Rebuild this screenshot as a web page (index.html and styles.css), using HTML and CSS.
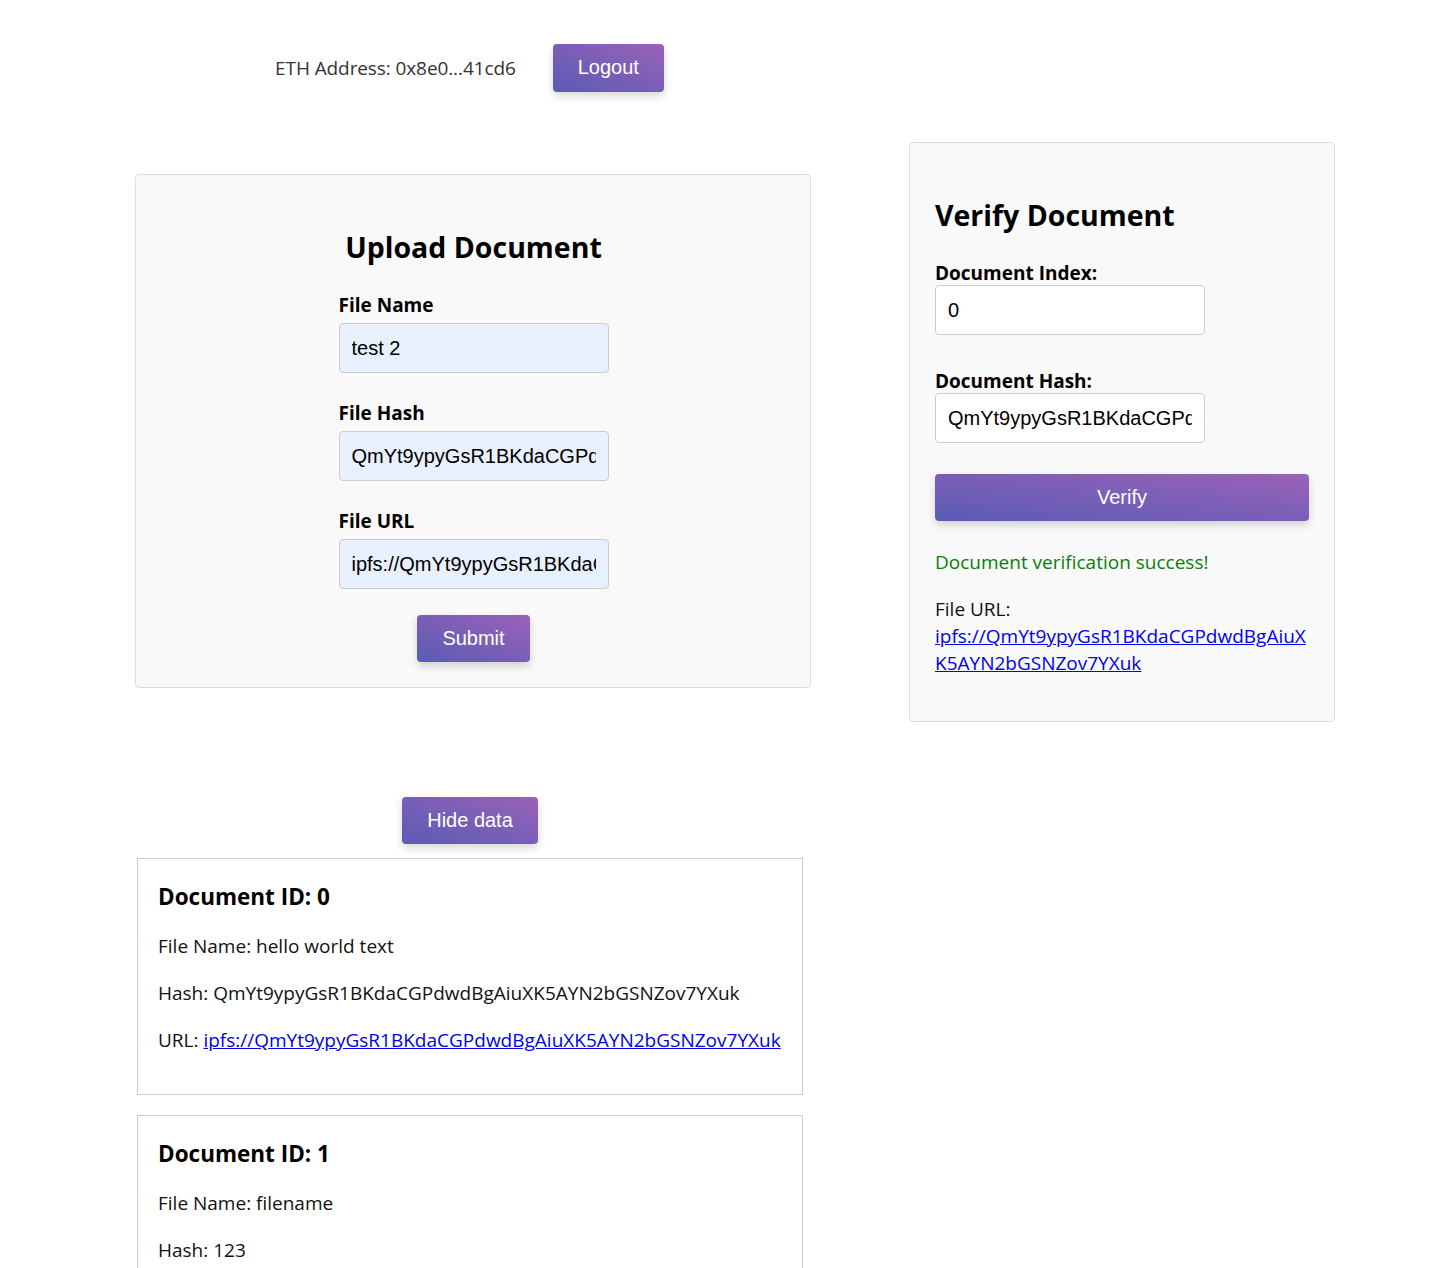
FILE: index.html
```html
<!DOCTYPE html>
<html lang="en">
<head>
<meta charset="utf-8">
<title>Document Registry</title>
<link rel="stylesheet" href="styles.css">
</head>
<body>
<div class="app">
  <div class="main-col">
    <div class="header">
      <span class="eth">ETH Address: 0x8e0...41cd6</span>
      <button class="btn">Logout</button>
    </div>
    <div class="card upload-card">
      <h2 class="card-title center">Upload Document</h2>
      <form class="upload-form">
        <div class="field">
          <label class="field-label">File Name</label>
          <input class="input filled" type="text" value="test 2">
        </div>
        <div class="field">
          <label class="field-label">File Hash</label>
          <input class="input filled" type="text" value="QmYt9ypyGsR1BKdaCGPdwdBgAiuXK5AYN2bGSNZov7YXuk">
        </div>
        <div class="field">
          <label class="field-label">File URL</label>
          <input class="input filled" type="text" value="ipfs://QmYt9ypyGsR1BKdaCGPdwdBgAiuXK5AYN2bGSNZov7YXuk">
        </div>
        <div class="submit-row">
          <button class="btn" type="button">Submit</button>
        </div>
      </form>
    </div>
  </div>
  <div class="side-col">
    <div class="card verify-card">
      <h2 class="card-title">Verify Document</h2>
      <label class="v-label">Document Index:</label>
      <input class="input" type="text" value="0">
      <label class="v-label second">Document Hash:</label>
      <input class="input" type="text" value="QmYt9ypyGsR1BKdaCGPdwdBgAiuXK5AYN2bGSNZov7YXuk">
      <button class="btn btn-block" type="button">Verify</button>
      <p class="success">Document verification success!</p>
      <p class="file-url">File URL:<br><a href="#"><span class="nw">ipfs://QmYt9ypyGsR1BKdaCGPdwdBgAiuX</span><wbr><span class="nw">K5AYN2bGSNZov7YXuk</span></a></p>
    </div>
  </div>
</div>
<div class="data-section">
  <button class="btn" type="button">Hide data</button>
  <div class="doc-card">
    <h3 class="doc-title">Document ID: 0</h3>
    <p class="doc-line">File Name: hello world text</p>
    <p class="doc-line">Hash: QmYt9ypyGsR1BKdaCGPdwdBgAiuXK5AYN2bGSNZov7YXuk</p>
    <p class="doc-line">URL: <a href="#">ipfs://QmYt9ypyGsR1BKdaCGPdwdBgAiuXK5AYN2bGSNZov7YXuk</a></p>
  </div>
  <div class="doc-card">
    <h3 class="doc-title">Document ID: 1</h3>
    <p class="doc-line">File Name: filename</p>
    <p class="doc-line">Hash: 123</p>
    <p class="doc-line">URL: <a href="#">ipfs://123</a></p>
  </div>
</div>
</body>
</html>
```
FILE: styles.css
```css
* { box-sizing: border-box; }
html, body { margin: 0; padding: 0; background: #fff; }
body {
  font-family: "Open Sans", "Noto Sans", sans-serif;
  font-size: 19px;
  line-height: 27px;
  color: #111;
  overflow: hidden;
}
.app {
  display: flex;
  align-items: flex-start;
  padding-left: 135px;
  gap: 98px;
}
.main-col { width: 676px; }
.side-col { width: 426px; margin-top: 142px; }
.header {
  display: flex;
  justify-content: center;
  align-items: center;
  gap: 37px;
  padding-top: 44px;
  padding-right: 7px;
}
.eth { color: #333; letter-spacing: -0.1px; }
.btn {
  font-family: "Liberation Sans", Arial, sans-serif;
  font-size: 20px;
  line-height: 23px;
  color: #fff;
  border: none;
  border-radius: 4px;
  padding: 12px 25px;
  background: linear-gradient(to top right, #5a5bb5, #9a62b8);
  box-shadow: 0 4px 8px rgba(0, 0, 0, 0.16);
  cursor: pointer;
}
.header .btn { padding: 12px 25px 13px; }
.card {
  background: #f9f9f9;
  border: 1px solid #ddd;
  border-radius: 4px;
}
.upload-card {
  margin-top: 82px;
  padding: 54px 25px 25px 26px;
}
.card-title {
  font-size: 28.5px;
  line-height: 36px;
  font-weight: 700;
  margin: 0 0 28px;
  color: #000;
}
.center { text-align: center; }
.upload-form {
  width: 270px;
  margin: 0 auto;
}
.field { margin-bottom: 28px; }
.field-label, .v-label {
  display: block;
  font-weight: 700;
  line-height: 24px;
  color: #000;
}
.field-label { margin-bottom: 6px; }
.v-label.second { margin-top: 34px; }
.input {
  display: block;
  width: 270px;
  height: 50px;
  padding: 0 12px;
  font-family: "Liberation Sans", Arial, sans-serif;
  font-size: 20px;
  color: #000;
  background: #fff;
  border: 1px solid #ccc;
  border-radius: 4px;
  outline: none;
}
.input.filled { background: #e8f0fe; }
.submit-row {
  display: flex;
  justify-content: center;
  margin-top: -2px;
}
.verify-card { padding: 54px 25px 24px; }
.btn-block {
  display: block;
  width: 100%;
  margin-top: 31px;
}
.success {
  color: #0a7d0a;
  margin: 28px 0 20px;
}
.file-url { margin: 20px 0; }
.nw { white-space: nowrap; }
a { color: #0000ee; }
.data-section {
  margin-left: 137px;
  width: 666px;
  margin-top: 75px;
  display: flex;
  flex-direction: column;
  align-items: center;
  gap: 20px;
}
.data-section > .btn { margin-bottom: -6px; }
.doc-card {
  align-self: stretch;
  background: #fff;
  border: 1px solid #ccc;
  padding: 22px 20px 20px;
}
.doc-title {
  font-size: 22.5px;
  line-height: 31px;
  font-weight: 700;
  margin: 0 0 21px;
  color: #000;
}
.doc-line { margin: 0 0 20px; }
```
